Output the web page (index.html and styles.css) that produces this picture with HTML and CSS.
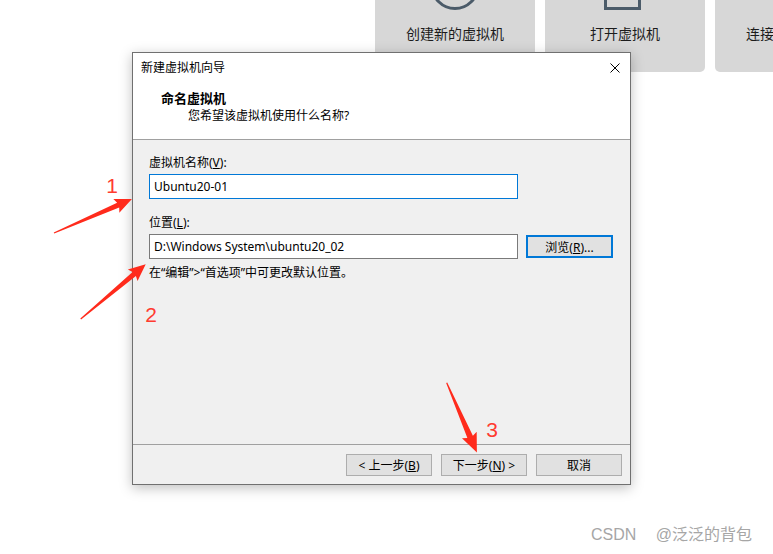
FILE: index.html
```html
<!DOCTYPE html>
<html lang="zh-CN">
<head>
    <meta charset="UTF-8">
    <meta name="viewport" content="width=device-width, initial-scale=1.0">
    <title>新建虚拟机向导</title>
    <link rel="stylesheet" href="styles.css">
</head>
<body>
    <div class="desktop">
        <div class="home-tiles">
            <div class="tile">
                <svg class="tile-icon" width="60" height="12" viewBox="0 0 60 12">
                    <circle cx="30" cy="-14.5" r="23" fill="none" stroke="#4b5b69" stroke-width="3"/>
                </svg>
                <span class="tile-label">创建新的虚拟机</span>
            </div>
            <div class="tile">
                <svg class="tile-icon" width="60" height="12" viewBox="0 0 60 12">
                    <rect x="10.5" y="-20" width="34" height="28.5" fill="none" stroke="#4b5b69" stroke-width="3"/>
                </svg>
                <span class="tile-label">打开虚拟机</span>
            </div>
            <div class="tile">
                <svg class="tile-icon" width="60" height="12" viewBox="0 0 60 12"></svg>
                <span class="tile-label">连接远程服务器</span>
            </div>
        </div>

        <div class="wizard">
            <div class="wizard-top">
                <div class="titlebar">
                    <span>新建虚拟机向导</span>
                    <svg class="close-x" width="10" height="10" viewBox="0 0 10 10">
                        <path d="M0.5 0.5 L9.5 9.5 M9.5 0.5 L0.5 9.5" stroke="#000" stroke-width="1"/>
                    </svg>
                </div>
                <div class="wizard-head">
                    <div class="head-title">命名虚拟机</div>
                    <div class="head-sub">您希望该虚拟机使用什么名称?</div>
                </div>
            </div>

            <div class="wizard-body">
                <label class="field-label" for="vmName">虚拟机名称(<u>V</u>):</label>
                <input class="textbox focused" id="vmName" type="text" value="Ubuntu20-01" readonly>

                <label class="field-label second" for="vmPath">位置(<u>L</u>):</label>
                <div class="path-row">
                    <input class="textbox" id="vmPath" type="text" value="D:\Windows System\ubuntu20_02" readonly>
                    <button type="button" class="btn btn-default">浏览(<u>R</u>)...</button>
                </div>
                <p class="hint">在“编辑”&gt;“首选项”中可更改默认位置。</p>
            </div>

            <div class="wizard-foot">
                <button type="button" class="btn">&lt; 上一步(<u>B</u>)</button>
                <button type="button" class="btn">下一步(<u>N</u>) &gt;</button>
                <button type="button" class="btn">取消</button>
            </div>
        </div>

        <!-- red hand-drawn annotations on top of the screenshot -->
        <svg class="marks" width="773" height="554" viewBox="0 0 773 554">
            <g fill="#ff2b1c">
                <polygon transform="translate(54 233) rotate(-23.55)" points="0,-0.6 70,-2.6 68,-7.5 85,0 68,7.5 70,2.6 0,0.6"/>
                <polygon transform="translate(80.7 319) rotate(-40.1)" points="0,-0.6 70,-2.6 68,-7.5 85,0 68,7.5 70,2.6 0,0.6"/>
                <polygon transform="translate(446.7 382.7) rotate(66.6)" points="0,-0.6 59,-3 57,-8 76,0 57,8 59,3 0,0.6"/>
            </g>
            <g class="mark-num" fill="#ff3b30" text-anchor="middle">
                <text x="112" y="193">1</text>
                <text x="151" y="321.5">2</text>
                <text x="492" y="436.5">3</text>
            </g>
        </svg>

        <div class="watermark">CSDN @泛泛的背包</div>
    </div>
</body>
</html>
```

FILE: styles.css
```css
body {
    margin: 0;
    background: #fff;
    font-family: "Noto Sans", "Noto Sans CJK SC", sans-serif;
    font-size: 12px;
    color: #000;
}

.desktop {
    position: relative;
    width: 773px;
    height: 554px;
    overflow: hidden;
    background: #fff;
}

/* home page tiles behind the dialog */
.home-tiles {
    display: flex;
    gap: 10px;
    padding-left: 375px;
}

.tile {
    flex-shrink: 0;
    width: 160px;
    height: 72px;
    background: #d7d7d7;
    border-radius: 0 0 5px 5px;
    display: flex;
    flex-direction: column;
    align-items: center;
}

.tile-icon {
    display: block;
}

.tile-label {
    margin-top: 11px;
    line-height: 20px;
    font-size: 14px;
    color: #1c1c1c;
    font-family: "Noto Sans CJK SC", sans-serif;
}

/* wizard window */
.wizard {
    position: absolute;
    left: 132px;
    top: 52px;
    width: 499px;
    height: 433px;
    box-sizing: border-box;
    border: 1px solid #707070;
    background: #f0f0f0;
    box-shadow: 0 3px 12px rgba(0, 0, 0, 0.25);
    display: flex;
    flex-direction: column;
}

.wizard-top {
    height: 87px;
    box-sizing: border-box;
    background: #fff;
    border-bottom: 1px solid #a0a0a0;
}

.titlebar {
    height: 30px;
    display: flex;
    align-items: center;
    justify-content: space-between;
    padding: 0 10px 0 8px;
    line-height: 16px;
}

.close-x {
    display: block;
}

.wizard-head {
    padding: 7px 0 0 28px;
}

.head-title {
    font-size: 13px;
    font-weight: bold;
    line-height: 16px;
}

.head-sub {
    margin-top: 2px;
    padding-left: 27px;
    line-height: 16px;
}

.wizard-body {
    height: 304px;
    box-sizing: border-box;
    padding: 15px 16px 0;
}

.field-label {
    display: block;
    line-height: 16px;
}

.field-label.second {
    margin-top: 16px;
}

.textbox {
    display: block;
    width: 369px;
    height: 25px;
    margin: 3px 0 0;
    box-sizing: border-box;
    border: 1px solid #7a7a7a;
    padding: 0 4px;
    background: #fff;
    font: inherit;
    color: #000;
    outline: none;
}

.textbox.focused {
    border-color: #0078d7;
}

.path-row {
    display: flex;
    align-items: center;
    margin-top: 3px;
}

.path-row .textbox {
    margin: 0;
}

.hint {
    margin: 6px 0 0;
    line-height: 16px;
}

.btn {
    width: 86px;
    height: 22px;
    padding: 0;
    box-sizing: border-box;
    border: 1px solid #adadad;
    background: #e1e1e1;
    font: inherit;
    color: #000;
}

.btn-default {
    width: 87px;
    height: 23px;
    margin-left: 8px;
    border: 2px solid #0078d7;
}

.wizard-foot {
    height: 40px;
    box-sizing: border-box;
    border-top: 1px solid #a0a0a0;
    display: flex;
    justify-content: flex-end;
    align-items: flex-start;
    gap: 9px;
    padding: 9px 8px 0 0;
}

/* annotations */
.marks {
    position: absolute;
    left: 0;
    top: 0;
    pointer-events: none;
}

.mark-num {
    font-family: "Liberation Sans", sans-serif;
    font-size: 21px;
}

.watermark {
    position: absolute;
    left: 591px;
    top: 526px;
    line-height: 18px;
    font-family: "Liberation Sans", "Noto Sans CJK SC", sans-serif;
    font-size: 16px;
    word-spacing: 15px;
    color: #a6a6a6;
}
```
